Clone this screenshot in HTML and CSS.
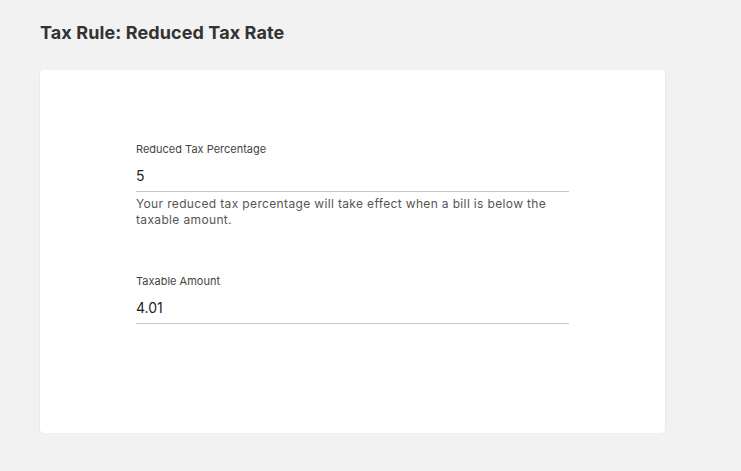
FILE: index.html
```html
<!DOCTYPE html>
<html>
<head>
<meta charset="utf-8">
<link rel="stylesheet" href="styles.css">
</head>
<body>
<div class="page">
  <h1 class="title">Tax Rule: Reduced Tax Rate</h1>
  <div class="card">
    <div class="field">
      <div class="label">Reduced Tax Percentage</div>
      <div class="value">5</div>
      <div class="help">Your reduced tax percentage will take effect when a bill is below the taxable amount.</div>
    </div>
    <div class="field">
      <div class="label">Taxable Amount</div>
      <div class="value">4.01</div>
    </div>
  </div>
</div>
</body>
</html>
```
FILE: styles.css
```css
html, body {
  margin: 0;
  padding: 0;
  background: #f2f2f2;
  font-family: Inter, "Liberation Sans", sans-serif;
  color: #333;
}
.page {
  padding: 21px 40px 0 40px;
}
.title {
  margin: 0;
  font-size: 18px;
  line-height: 24px;
  font-weight: 700;
  color: #333;
  letter-spacing: 0.1px;
}
.card {
  margin-top: 25px;
  width: 625px;
  height: 363px;
  box-sizing: border-box;
  background: #fff;
  border-radius: 4px;
  box-shadow: 0 1px 3px rgba(0,0,0,0.08);
  padding: 72px 96px 0 96px;
  display: flex;
  flex-direction: column;
  gap: 46px;
}
.field {
  width: 433px;
}
.label {
  font-size: 11px;
  line-height: 14px;
  color: #444;
}
.value {
  margin-top: 10px;
  font-size: 14px;
  line-height: 19px;
  color: #222;
  padding-bottom: 6px;
  border-bottom: 1px solid #c4c4c4;
}
.help {
  margin-top: 4px;
  font-size: 12px;
  line-height: 16px;
  color: #555;
  letter-spacing: 0.35px;
}
```
